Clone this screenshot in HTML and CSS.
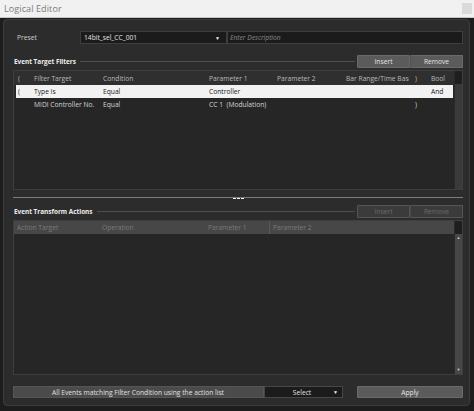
FILE: index.html
```html
<!DOCTYPE html>
<html lang="en">
<head>
<meta charset="utf-8">
<title>Logical Editor</title>
<link rel="stylesheet" href="styles.css">
</head>
<body>
<div class="titlebar">
  <span class="title">Logical Editor</span>
  <span class="close"></span>
</div>
<div class="frame">
  <div class="panel">
    <div class="preset-row">
      <span class="label">Preset</span>
      <div class="combo preset">
        <span>14bit_sel_CC_001</span>
        <span class="arrow">&#9660;</span>
      </div>
      <div class="field desc">Enter Description</div>
    </div>

    <div class="section-head first">
      <span class="section-title">Event Target Filters</span>
      <span class="rule"></span>
      <div class="btn-group">
        <button class="btn">Insert</button>
        <button class="btn">Remove</button>
      </div>
    </div>

    <div class="table filters">
      <div class="table-body">
        <div class="row head filter-cols">
          <span>(</span><span>Filter Target</span><span>Condition</span><span>Parameter 1</span><span>Parameter 2</span><span class="clip">Bar Range/Time Base</span><span>)</span><span>Bool</span>
        </div>
        <div class="rows">
          <div class="row filter-cols selected">
            <span>(</span><span>Type Is</span><span>Equal</span><span>Controller</span><span></span><span></span><span></span><span>And</span>
          </div>
          <div class="row filter-cols">
            <span></span><span>MIDI Controller No.</span><span>Equal</span><span>CC 1&nbsp; (Modulation)</span><span></span><span></span><span>)</span><span></span>
          </div>
        </div>
      </div>
      <div class="scrollbar">
        <div class="thumb"></div>
        <div class="track"></div>
      </div>
    </div>

    <div class="splitter">
      <span class="grip"><i></i><i></i><i></i></span>
    </div>

    <div class="section-head">
      <span class="section-title">Event Transform Actions</span>
      <span class="rule"></span>
      <div class="btn-group">
        <button class="btn disabled">Insert</button>
        <button class="btn disabled">Remove</button>
      </div>
    </div>

    <div class="table actions">
      <div class="table-body">
        <div class="row head action-cols">
          <span>Action Target</span><span>Operation</span><span>Parameter 1</span><span class="divided">Parameter 2</span>
        </div>
        <div class="rows"></div>
      </div>
      <div class="scrollbar">
        <div class="thumb"></div>
        <div class="track">
          <span class="sarrow">&#9650;</span>
          <span class="sarrow">&#9660;</span>
        </div>
      </div>
    </div>

    <div class="bottom-row">
      <div class="mode">All Events matching Filter Condition using the action list</div>
      <div class="combo select">
        <span class="select-text">Select</span>
        <span class="arrow">&#9660;</span>
      </div>
      <button class="btn apply">Apply</button>
    </div>
  </div>
</div>
</body>
</html>
```

FILE: styles.css
```css
* {
  box-sizing: border-box;
}

html, body {
  margin: 0;
  padding: 0;
}

body {
  width: 474px;
  height: 411px;
  overflow: hidden;
  background: #1d1d1d;
  font-family: "Open Sans", "Noto Sans", sans-serif;
  font-size: 6.7px;
  color: #d8d8d8;
}

/* window title bar */
.titlebar {
  height: 18px;
  background: #f1f1f1;
  display: flex;
  align-items: center;
  justify-content: space-between;
  padding: 0 2px 0 4px;
  border-bottom: 1px solid #c9c9c9;
}

.title {
  font-size: 9px;
  color: #7b7b7b;
  letter-spacing: 0.1px;
}

.close {
  width: 10px;
  height: 11px;
  background: #dadada;
  margin-top: -1px;
}

/* dark window body */
.frame {
  height: 393px;
  padding: 1px 4px 5px 3px;
}

.panel {
  height: 100%;
  background: #2c2c2c;
  border: 1px solid #3d3d3d;
  border-radius: 4px;
  padding: 11px 6px 7px 9px;
  display: flex;
  flex-direction: column;
}

.panel > * {
  flex-shrink: 0;
}

/* preset row */
.preset-row {
  height: 13px;
  display: flex;
  align-items: stretch;
}

.label {
  width: 67px;
  padding-left: 4px;
  display: flex;
  align-items: center;
  color: #d0d0d0;
}

.combo,
.field {
  background: #1b1b1b;
  border: 1px solid #3e3e3e;
  display: flex;
  align-items: center;
}

.preset {
  width: 147px;
  padding: 0 6px 0 3px;
  justify-content: space-between;
  color: #e2e2e2;
}

.arrow {
  font-size: 5px;
  color: #f0f0f0;
}

.desc {
  flex: 1;
  padding-left: 2px;
  font-style: italic;
  color: #8a8a8a;
}

/* section header with buttons */
.section-head {
  height: 13px;
  display: flex;
  align-items: center;
}

.section-head.first {
  margin-top: 11px;
}

.section-title {
  font-weight: bold;
  font-size: 6.4px;
  color: #ededed;
  padding-left: 1px;
}

.rule {
  flex: 1;
  height: 1px;
  background: #4f4f4f;
  margin: 0 2px 0 4px;
}

.btn-group {
  display: flex;
  width: 106px;
  height: 13px;
}

.btn {
  flex: 1;
  height: 100%;
  margin: 0;
  padding: 0;
  font-family: inherit;
  font-size: 6.7px;
  color: #e4e4e4;
  background: #5b5b5b;
  border: 1px solid #6a6a6a;
  border-radius: 1px;
}

.btn-group .btn + .btn {
  border-left: 1px solid #505050;
}

.btn.disabled {
  background: #3b3b3b;
  border-color: #555;
  color: #6d6d6d;
}

.btn-group .btn.disabled + .btn.disabled {
  border-left-color: #4a4a4a;
}

/* list tables */
.table {
  margin-top: 2px;
  display: flex;
  background: #262626;
  border: 1px solid #3e3e3e;
}

.filters {
  height: 120px;
}

.actions {
  height: 155px;
}

.table-body {
  flex: 1;
  display: flex;
  flex-direction: column;
  min-width: 0;
}

.row {
  display: grid;
  align-items: center;
  height: 13px;
  white-space: nowrap;
}

.row span {
  overflow: hidden;
}

.row.head {
  height: 14px;
}

.filters .row.head {
  background: #2f2f2f;
  color: #b9b9b9;
}

.filter-cols {
  grid-template-columns: 16px 69px 106px 68px 69px 69px 16px 1fr;
  padding-left: 4px;
}

.filters .rows {
  padding-left: 2px;
  padding-right: 1px;
}

.filters .rows .row {
  padding-left: 2px;
  color: #d6d6d6;
}

.row.selected {
  background: #f2f2f2;
}

.filters .rows .row.selected {
  color: #202020;
}

/* long header cut short by the narrow column */
.clip {
  width: 63px;
  text-overflow: clip;
}

.actions .row.head {
  background: #474747;
  color: #7a7a7a;
  height: 13px;
}

.action-cols {
  grid-template-columns: 85px 106px 65px 1fr;
  padding-left: 3px;
}

.divided {
  border-left: 1px solid #5a5a5a;
  padding-left: 3px;
  margin-left: -4px;
  height: 100%;
  display: flex;
  align-items: center;
}

/* vertical scrollbars */
.scrollbar {
  width: 8px;
  display: flex;
  flex-direction: column;
  border-left: 1px solid #2a2a2a;
}

.thumb {
  height: 13px;
  background: #1f1f1f;
}

.track {
  flex: 1;
  background: #3a3a3a;
  display: flex;
  flex-direction: column;
  justify-content: space-between;
  align-items: center;
}

.actions .track {
  background: #474747;
}

.sarrow {
  font-size: 4px;
  color: #cfcfcf;
  line-height: 6px;
  padding: 1px 0;
}

/* splitter between the two lists */
.splitter {
  height: 15px;
  position: relative;
  display: flex;
  align-items: center;
  justify-content: center;
}

.splitter::before {
  content: "";
  position: absolute;
  left: 0;
  right: 0;
  top: 7px;
  height: 1px;
  background: #7c7c7c;
}

.grip {
  position: relative;
  display: flex;
  gap: 1px;
  margin-top: 1px;
  background: #2c2c2c;
  padding: 0 1px;
}

.grip i {
  display: block;
  width: 3px;
  height: 1px;
  background: #f4f4f4;
}

/* bottom action row */
.bottom-row {
  margin-top: 11px;
  height: 12px;
  display: flex;
}

.mode {
  width: 251px;
  background: #4b4b4b;
  border: 1px solid #555;
  color: #e0e0e0;
  display: flex;
  align-items: center;
  justify-content: flex-end;
  padding-right: 39px;
}

.select {
  width: 79px;
  padding: 0 4px 0 0;
  justify-content: space-between;
  color: #e2e2e2;
  border-color: #474747;
}

.select-text {
  flex: 1;
  text-align: center;
  padding-left: 6px;
}

.apply {
  flex: none;
  width: 106px;
  height: 12px;
  margin-left: auto;
}
```
